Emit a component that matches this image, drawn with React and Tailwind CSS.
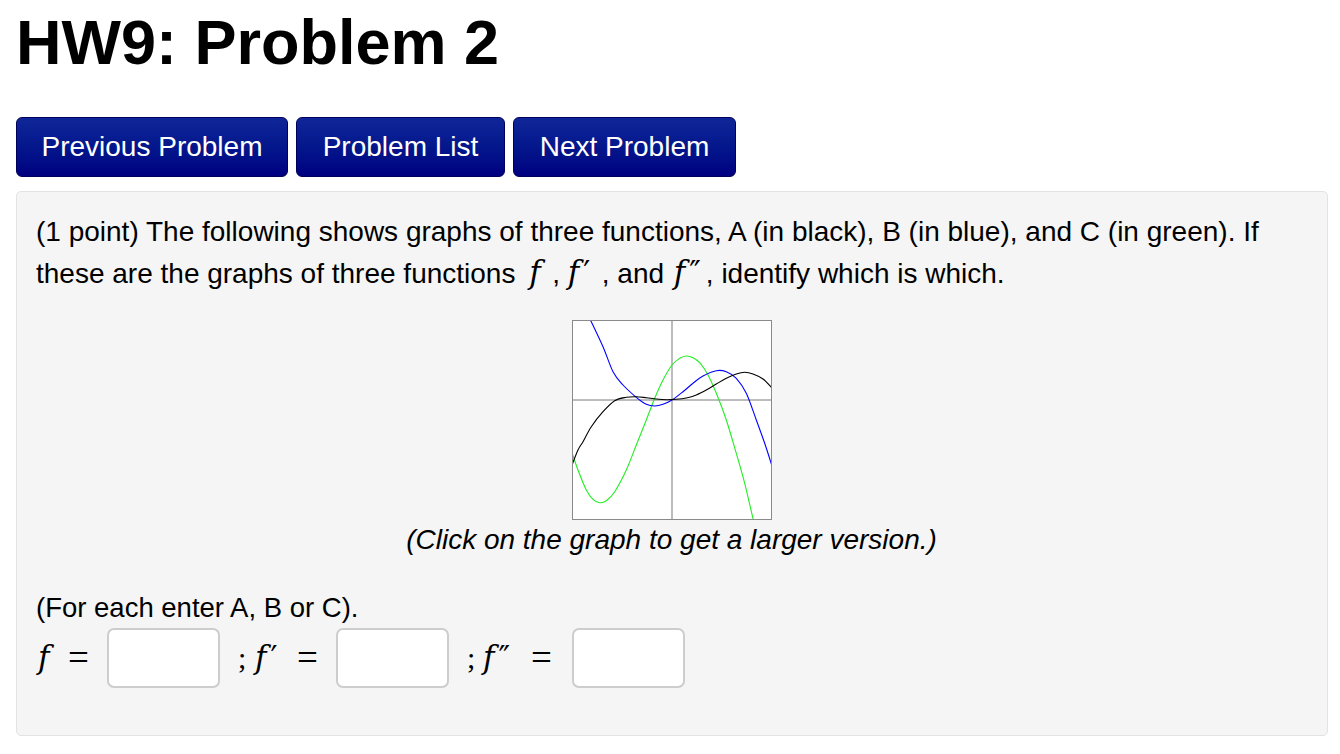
import React from 'react';

// traced points of the three curves, in the 200x200 graph box
const blackPts = [
  [0, 145], [6, 130], [11, 121.7], [19.3, 106.7], [31, 91.7], [42.7, 80.7], [54.3, 77.3], [64.3, 76.7],
  [74.3, 77.7], [84.3, 79], [94.3, 79.7], [104.3, 79.3], [114.3, 78], [124.3, 75], [134.3, 70],
  [144.3, 64], [154.3, 58.3], [164.3, 54], [172.7, 52.3], [181, 54], [191, 59], [200, 68],
];
const bluePts = [
  [17, -3], [31, 26.7], [41, 51.7], [51, 65], [64.3, 77.3], [74.3, 84.3], [82.7, 86], [91, 84.3],
  [100, 80], [111, 71.7], [121, 63.3], [131, 56], [144.3, 50.7], [154.3, 51.7], [164.3, 58.3],
  [174.3, 73.3], [184.3, 100], [192.7, 123.3], [200, 146],
];
const greenPts = [
  [0, 132.7], [6, 150], [14.3, 170], [21, 179.3], [27.7, 182.7], [34.3, 180.7], [42.7, 171.7],
  [54.3, 150], [64.3, 125], [74.3, 100], [82.7, 78.3], [91, 60], [100, 45], [107.7, 38.3],
  [114.3, 36], [121, 37.7], [127.7, 42.7], [136, 55], [144.3, 73.3], [154.3, 100], [164.3, 133.3],
  [172.7, 163.3], [182, 203],
];

const smooth = (pts) => {
  let d = `M${pts[0][0]},${pts[0][1]}`;
  for (let i = 0; i < pts.length - 1; i++) {
    const p0 = pts[i - 1] || pts[i];
    const p1 = pts[i];
    const p2 = pts[i + 1];
    const p3 = pts[i + 2] || p2;
    const c1 = [p1[0] + (p2[0] - p0[0]) / 6, p1[1] + (p2[1] - p0[1]) / 6];
    const c2 = [p2[0] - (p3[0] - p1[0]) / 6, p2[1] - (p3[1] - p1[1]) / 6];
    d += ` C${c1[0].toFixed(2)},${c1[1].toFixed(2)} ${c2[0].toFixed(2)},${c2[1].toFixed(2)} ${p2[0]},${p2[1]}`;
  }
  return d;
};

const Graph = () => (
  <svg width="200" height="200" viewBox="0 0 200 200" className="block bg-white">
    <defs>
      <clipPath id="box">
        <rect x="0" y="0" width="200" height="200" />
      </clipPath>
    </defs>
    <line x1="100" y1="0" x2="100" y2="200" stroke="#7a7a7a" strokeWidth="1" />
    <line x1="0" y1="80" x2="200" y2="80" stroke="#7a7a7a" strokeWidth="1" />
    <g clipPath="url(#box)" fill="none" strokeWidth="1.1">
      <path d={smooth(greenPts)} stroke="#22ee22" />
      <path d={smooth(bluePts)} stroke="#0000ff" />
      <path d={smooth(blackPts)} stroke="#000000" />
    </g>
    <rect x="0.5" y="0.5" width="199" height="199" fill="none" stroke="#8a8a8a" strokeWidth="1" />
  </svg>
);

const serif = { fontFamily: '"Liberation Serif", "DejaVu Serif", serif' };
const mathF = { fontFamily: '"DejaVu Serif", "Liberation Serif", serif' };

// italic f with optional primes, roughly like the MathJax output
const Fn = ({ primes = 0, className = '' }) => (
  <span className={`inline-block leading-[40px] whitespace-nowrap ${className}`}>
    <span className="italic text-[31px]" style={mathF}>f</span>
    {primes > 0 && (
      <span className="text-[31px] ml-[4px]" style={mathF}>
        {primes === 1 ? '′' : '″'}
      </span>
    )}
  </span>
);

const Eq = ({ className = '' }) => (
  <span className={`inline-block text-[37px] leading-[40px] ${className}`} style={serif}>=</span>
);

const Semi = ({ className = '' }) => (
  <span className={`inline-block text-[30px] leading-[40px] ${className}`} style={serif}>;</span>
);

const Answer = () => (
  <input
    type="text"
    className="w-[113px] h-[60px] bg-white border-2 border-[#cdcdcd] rounded-[7px] outline-none"
  />
);

const NavButton = ({ label, width }) => (
  <button className={`h-[60px] ${width} rounded-[6px] border border-[#00005c] bg-gradient-to-b from-[#0f2698] to-[#000080] text-white text-[28px] leading-none`}>
    {label}
  </button>
);

export default function App() {
  return (
    <div
      className="min-h-screen bg-white text-black pl-4 pr-3 pt-2"
      style={{ fontFamily: '"Liberation Sans", Arial, sans-serif' }}
    >
      <h1 className="text-[63px] leading-[68px] font-bold">HW9: Problem 2</h1>

      <div className="mt-[41px] flex gap-2">
        <NavButton label="Previous Problem" width="w-[272px]" />
        <NavButton label="Problem List" width="w-[209px]" />
        <NavButton label="Next Problem" width="w-[223px]" />
      </div>

      <div className="mt-[14px] bg-[#f5f5f5] border border-[#e3e3e3] rounded-[5px] pl-[19px] pr-5 pt-5 pb-[47px] text-[28px] leading-[40px]">
        <p className="whitespace-nowrap">
          (1 point) The following shows graphs of three functions, A (in black), B (in blue), and C (in green). If
          <br />
          these are the graphs of three functions{' '}
          <Fn className="w-[29px] pl-[6px]" />, <Fn primes={1} className="w-[34px]" />, and{' '}
          <Fn primes={2} className="w-[34px] pl-[2px]" />, identify which is which.
        </p>

        <div className="mt-[26px] flex flex-col items-center">
          <Graph />
          <p className="italic">(Click on the graph to get a larger version.)</p>
        </div>

        <p className="mt-[28px] text-[27.5px]">(For each enter A, B or C).</p>
        <div className="flex items-center h-[60px]">
          <span className="w-[71px] flex items-center">
            <Fn className="ml-[2px] w-[14px]" />
            <Eq className="ml-[16px]" />
          </span>
          <Answer />
          <span className="w-[116px] flex items-center">
            <Semi className="ml-[18px] w-[8px]" />
            <Fn primes={1} className="ml-[9px] w-[30px]" />
            <Eq className="ml-[12px]" />
          </span>
          <Answer />
          <span className="w-[123px] flex items-center">
            <Semi className="ml-[18px] w-[8px]" />
            <Fn primes={2} className="ml-[8px] w-[36px]" />
            <Eq className="ml-[12px]" />
          </span>
          <Answer />
        </div>
      </div>
    </div>
  );
}
